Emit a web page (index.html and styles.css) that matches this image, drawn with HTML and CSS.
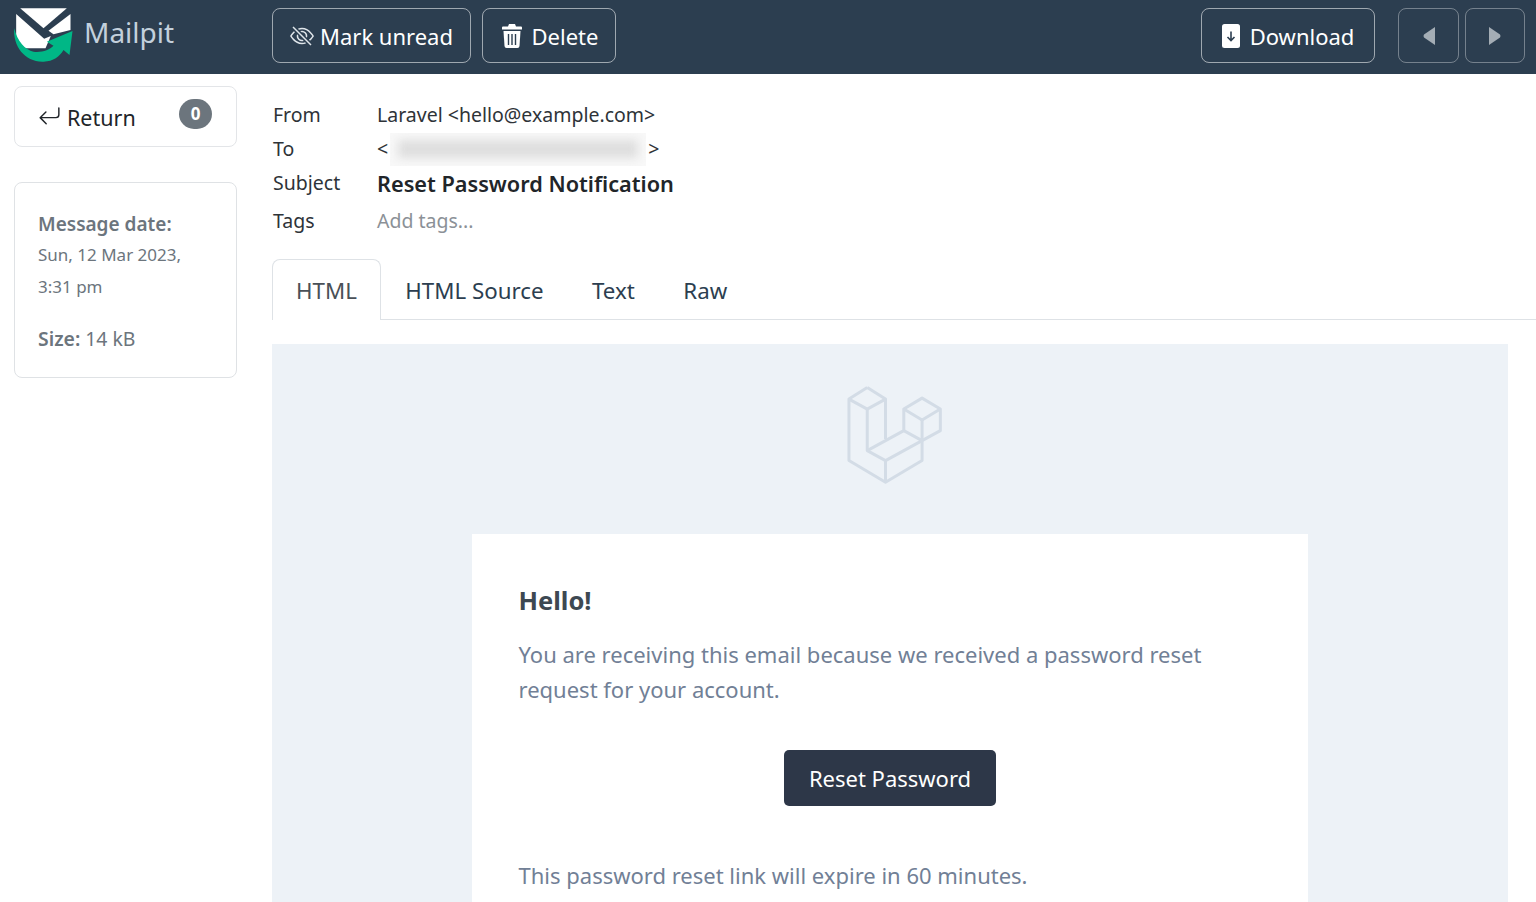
FILE: index.html
```html
<!DOCTYPE html>
<html lang="en">
<head>
<meta charset="utf-8">
<title>Mailpit</title>
<link rel="stylesheet" href="styles.css">
</head>
<body>
<header class="topbar">
  <a class="brand">
    <svg class="logo" viewBox="30 15 200 180"><path fill="#fff" d="M60 25H200L130 85Z"/><path fill="#fff" d="M48 42L132 116L152 108L136 145H72Q50 140 48 115Z"/><path fill="#fff" d="M211 42V90L160 103L145 92Z"/><path fill="#00b786" d="M42 85C38 140 75 187 130 185C160 184 178 170 190 150L208 165L217 93L140 125L160 137C148 150 125 158 100 155C75 150 52 125 42 85Z"/></svg>
    <span class="brand-name">Mailpit</span>
  </a>
  <button class="btn btn-unread"><svg class="ico" viewBox="0 0 16 16" fill="currentColor"><path d="M13.359 11.238C15.06 9.72 16 8 16 8s-3-5.5-8-5.5a7.028 7.028 0 0 0-2.79.588l.77.771A5.944 5.944 0 0 1 8 3.5c2.12 0 3.879 1.168 5.168 2.457A13.134 13.134 0 0 1 14.828 8c-.058.087-.122.183-.195.288-.335.48-.83 1.12-1.465 1.755-.165.165-.337.328-.517.486l.708.709z"/><path d="M11.297 9.176a3.5 3.5 0 0 0-4.474-4.474l.823.823a2.5 2.5 0 0 1 2.829 2.829l.822.822zm-2.943 1.299.822.822a3.5 3.5 0 0 1-4.474-4.474l.823.823a2.5 2.5 0 0 0 2.829 2.829z"/><path d="M3.35 5.47c-.18.16-.353.322-.518.487A13.134 13.134 0 0 0 1.172 8l.195.288c.335.48.83 1.12 1.465 1.755C4.121 11.332 5.881 12.5 8 12.5c.716 0 1.39-.133 2.02-.36l.77.772A7.029 7.029 0 0 1 8 13.5C3 13.5 0 8 0 8s.939-1.721 2.641-3.238l.708.709zm10.296 8.884-12-12 .708-.708 12 12-.708.708z"/></svg>Mark unread</button>
  <button class="btn btn-delete"><svg class="ico" viewBox="0 0 20 24"><path fill="#fff" d="M7 0H13L14 2.500H19Q20 2.500 20 3.500V5.500H0V3.500Q0 2.500 1 2.500H6Z"/><path fill="#fff" d="M1.500 7H18.500L17.500 22Q17.300 24 15.500 24H4.500Q2.700 24 2.500 22Z"/><path stroke="#2c3e50" stroke-width="1.400" d="M6.500 10V21M10 10V21M13.500 10V21"/></svg>Delete</button>
  <button class="btn btn-download"><svg class="ico-file" viewBox="0 0 18 24"><rect width="18" height="24" rx="2.500" fill="#fff"/><path fill="none" stroke="#2c3e50" stroke-width="1.600" d="M9 7.500V16.500M5.500 13L9 16.500L12.500 13"/></svg>Download</button>
  <button class="btn btn-nav btn-prev"><svg class="ico-caret" viewBox="0 0 12 18"><path fill="currentColor" d="M12 0V18L1 10.500Q0 9 1 7.500Z"/></svg></button>
  <button class="btn btn-nav btn-next"><svg class="ico-caret" viewBox="0 0 12 18"><path fill="currentColor" d="M0 0V18L11 10.500Q12 9 11 7.500Z"/></svg></button>
</header>
<div class="layout">
  <aside class="sidebar">
    <a class="return-card">
      <svg class="ico-return" viewBox="0 0 16 16" fill="currentColor"><path d="M14.500 1.500a.5.5 0 0 1 .5.5v4.800a2.500 2.500 0 0 1-2.500 2.500H2.707l3.347 3.346a.5.5 0 0 1-.708.708l-4.200-4.200a.5.5 0 0 1 0-.708l4-4a.5.5 0 1 1 .708.708L2.707 8.300H12.500A1.500 1.500 0 0 0 14 6.800V2a.5.5 0 0 1 .5-.5z"/></svg>
      <span class="return-label">Return</span>
      <span class="badge">0</span>
    </a>
    <div class="info-card">
      <div class="info-title">Message date:</div>
      <div class="info-date">Sun, 12 Mar 2023, 3:31 pm</div>
      <div class="info-size"><b>Size:</b> 14 kB</div>
    </div>
  </aside>
  <main class="main">
    <div class="meta">
      <div class="meta-label">From</div><div class="meta-value">Laravel &lt;hello@example.com&gt;</div>
      <div class="meta-label">To</div><div class="meta-value meta-to">&lt;<span class="redacted"><span class="blurred"></span></span>&gt;</div>
      <div class="meta-label">Subject</div><div class="meta-value meta-subject">Reset Password Notification</div>
      <div class="meta-label meta-last">Tags</div><div class="meta-value meta-tags meta-last">Add tags...</div>
    </div>
    <nav class="tabs">
      <a class="tab tab-active">HTML</a>
      <a class="tab">HTML Source</a>
      <a class="tab">Text</a>
      <a class="tab">Raw</a>
    </nav>
    <div class="frame">
      <div class="mail-logo">
        <svg class="laravel" viewBox="55 40 310 300" fill="none" stroke="#d3dce6" stroke-width="9" stroke-linejoin="round"><path d="M140 50L85 85V270L195 335L305 270V210"/><path d="M140 50L195 85V205"/><path d="M85 85L140 115L195 85"/><path d="M140 115V240L195 270V335"/><path d="M195 270L305 210L360 180V115L305 82L250 115V180L140 240"/><path d="M250 115L305 148L360 115"/><path d="M305 148V210M250 180L305 210"/></svg>
      </div>
      <div class="mail-card">
        <h1 class="mail-hello">Hello!</h1>
        <p class="mail-text">You are receiving this email because we received a password reset request for your account.</p>
        <div class="mail-action"><a class="mail-button">Reset Password</a></div>
        <p class="mail-text">This password reset link will expire in 60 minutes.</p>
      </div>
    </div>
  </main>
</div>
</body>
</html>
```
FILE: styles.css
```css
* { box-sizing: border-box; }
html, body { margin: 0; height: 902px; overflow: hidden; }
body { font-family: "Noto Sans", "Open Sans", sans-serif; color: #212529; background: #fff; font-size: 21px; }
.topbar { height: 74px; background: #2c3e50; display: flex; align-items: flex-start; padding: 8px 11px 0 0; }
.brand { width: 272px; margin-top: -8px; height: 64px; display: flex; align-items: center; padding-left: 10px; gap: 7px; }
.logo { width: 67px; height: 60px; display: block; align-self: flex-start; margin-top: 5px; }
.brand-name { color: #c3d0dc; font-size: 28px; }
.btn { height: 55px; background: transparent; border: 1.5px solid rgba(255,255,255,.55); border-radius: 8px; color: #fff; font: inherit; font-size: 22px; display: flex; align-items: center; justify-content: center; padding: 0; }
.btn-unread { width: 199px; gap: 6px; }
.btn-delete { width: 134px; margin-left: 11px; gap: 8px; }
.btn-download { width: 174px; margin-left: auto; gap: 10px; }
.btn-nav { color: #a4adb5; border-color: rgba(255,255,255,.35); }
.btn-prev { width: 61px; margin-left: 23px; }
.btn-next { width: 60px; margin-left: 6px; }
.ico { width: 24px; height: 24px; }
.btn-unread .ico { color: #dfe5ea; }
.ico-file { width: 18px; height: 24px; }
.ico-caret { width: 12px; height: 18px; }
.layout { display: flex; }
.sidebar { width: 272px; padding: 12px 35px 0 14px; display: flex; flex-direction: column; gap: 35px; flex: none; }
.return-card { height: 61px; border: 1.5px solid #e3e5e8; border-radius: 8px; display: flex; align-items: center; padding: 0 24px 0 23px; font-size: 21.500px; }
.return-label { padding-top: 2px; }
.ico-return { width: 23px; height: 23px; margin-right: 6px; }
.badge { margin-left: auto; width: 33px; height: 30px; border-radius: 15px; background: #6c757d; color: #fff; font-size: 17px; font-weight: 700; display: flex; align-items: center; justify-content: center; position: relative; top: -3px; }
.info-card { height: 196px; border: 1.5px solid #dfe2e5; border-radius: 8px; padding: 26px 23px; color: #6c757d; }
.info-title { font-weight: 600; font-size: 19px; line-height: 30px; }
.info-date { font-size: 17px; line-height: 32px; }
.info-size { font-size: 19.400px; line-height: 30px; margin-top: 21px; }
.info-size b { font-weight: 600; }
.main { flex: 1; min-width: 0; padding-top: 24px; }
.meta { display: grid; grid-template-columns: 104px 1fr; margin-left: 1px; font-size: 19.500px; line-height: 34px; }
.meta-label { color: #2e3338; }
.meta-value { color: #2e3338; }
.meta-to { display: flex; align-items: center; }
.redacted { width: 256px; height: 33px; margin: 0 2px; background: #f8f8f8; overflow: hidden; display: flex; align-items: center; justify-content: center; }
.blurred { width: 240px; height: 18px; background: #dedede; filter: blur(5px); }
.meta-subject { font-size: 21.700px; font-weight: 600; line-height: 35px; color: #212529; }
.meta-tags { color: #8b9197; }
.meta-last { margin-top: 3px; }
.tabs { display: flex; border-bottom: 1.5px solid #dee2e6; height: 61px; margin-top: 21px; font-size: 22.300px; color: #2c3e50; }
.tab { height: 60px; padding: 0 23.500px 0 23px; line-height: 62px; border: 1.5px solid transparent; border-bottom: 0; }
.tab-active { background: #fff; color: #495057; border-color: #dee2e6; border-radius: 8px 8px 0 0; margin-bottom: -1.500px; height: 61px; }
.frame { margin: 24px 28px 0 0; background: #edf2f7; height: 600px; padding-top: 40px; }
.mail-logo { text-align: center; height: 150px; }
.laravel { width: 103px; height: 100px; }
.mail-card { width: 836px; margin: 0 auto; background: #fff; padding: 47px 46.500px; color: #718096; font-size: 22px; line-height: 35px; }
.mail-hello { margin: 0; font-size: 25.500px; font-weight: 700; color: #3d4852; line-height: 38px; }
.mail-text { margin: 18px 0 0; }
.mail-action { margin-top: 43px; display: flex; justify-content: center; }
.mail-button { width: 212px; height: 56px; border-radius: 5px; background: #2d3748; color: #fff; display: flex; align-items: center; justify-content: center; }
.mail-action + .mail-text { margin-top: 52px; }
```
